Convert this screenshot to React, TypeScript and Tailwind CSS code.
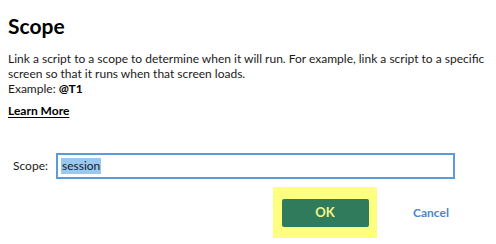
import React from 'react';

export default function App() {
  return (
    <div className="w-[496px] h-[244px] bg-white text-[#1a1a1a] overflow-hidden" style={{ fontFamily: 'Lato, "Open Sans", sans-serif' }}>
      <div className="px-2 pt-[12px]">
        <h1 className="text-[21px] font-bold leading-[28px] text-black">Scope</h1>
        <p className="mt-[11px] text-[12px] leading-[15px] whitespace-nowrap">
          Link a script to a scope to determine when it will run. For example, link a script to a specific
          <br />
          screen so that it runs when that screen loads.
          <br />
          Example: <b className="font-bold text-black">@T1</b>
        </p>
        <a href="#" className="mt-[7px] inline-block text-[12px] leading-[15px] font-bold text-black underline underline-offset-2">
          Learn More
        </a>
      </div>

      <div className="mt-[32px] flex items-center pl-[13px]">
        <label className="text-[12px] mr-[8px]">Scope:</label>
        <div className="w-[399px] h-[26px] border-2 border-[#5b9bd9] flex items-center pl-[3px]">
          <span className="bg-[#99c9f0] text-[12px] leading-[16px] px-[1px]">session</span>
        </div>
      </div>

      <div className="mt-[8px] flex items-center">
        <div className="ml-[273px] w-[104px] h-[51px] bg-[#ffff7f] flex items-center justify-center">
          <button className="w-[87px] h-[28px] rounded-[2px] bg-[#317b5d] text-[#f3f58c] text-[13px] font-bold">
            OK
          </button>
        </div>
        <button className="ml-[36px] text-[12px] font-bold text-[#4a87cc]">Cancel</button>
      </div>
    </div>
  );
}
